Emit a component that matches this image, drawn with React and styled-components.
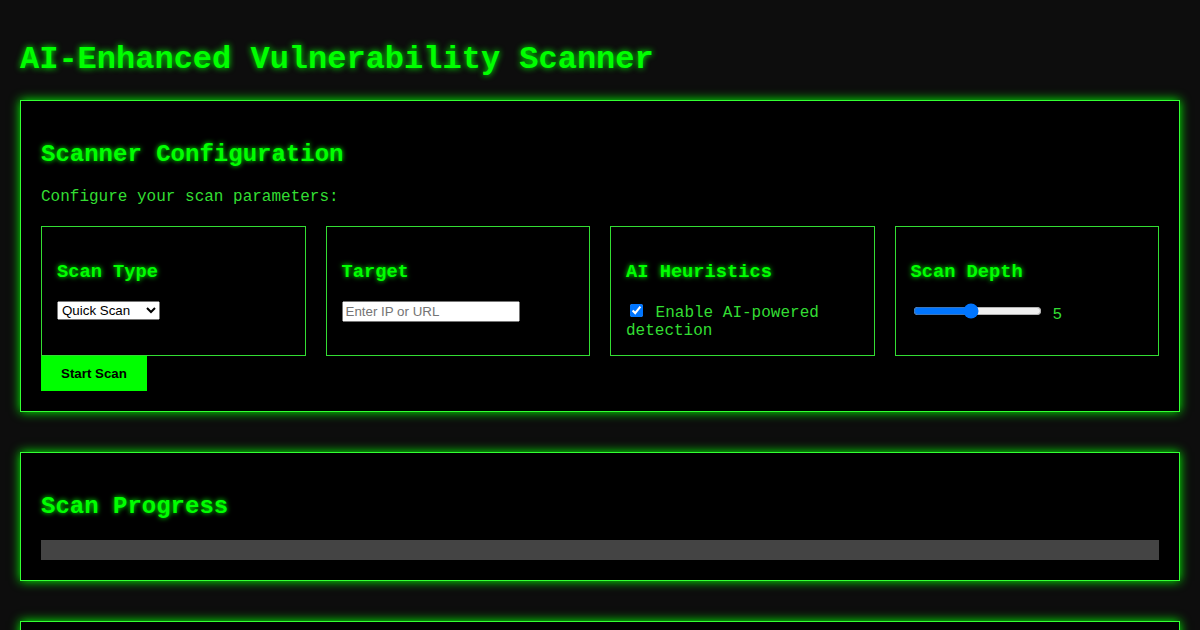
import React, { useState } from "react";
import styled, { createGlobalStyle } from "styled-components";

const GlobalStyle = createGlobalStyle`
  body {
    margin: 0;
    padding: 20px;
    background-color: #0d0d0d;
    color: #33dd33;
    font-family: "Liberation Mono", "Courier New", monospace;
  }
`;

const Title = styled.h1`
  margin: 21px 0 22px;
  font-size: 32px;
  color: #00ff00;
  text-shadow: 0 0 6px #00ff00;
`;

const Panel = styled.section`
  margin-bottom: 40px;
  padding: 20px;
  background-color: #000;
  border: 1px solid #33ff33;
  box-shadow: 0 0 10px #00ff00;

  h2 {
    margin: 20px 0;
    font-size: 24px;
    color: #00ff00;
    text-shadow: 0 0 5px #00ff00;
  }

  p {
    margin: 16px 0;
    font-size: 16px;
  }
`;

const CardGrid = styled.div`
  display: grid;
  grid-template-columns: repeat(4, 1fr);
  gap: 20px;
  margin-top: 20px;
`;

const Card = styled.div`
  padding: 15px;
  border: 1px solid #33dd33;

  h3 {
    margin: 18.72px 0;
    font-size: 18.72px;
    color: #00ff00;
    text-shadow: 0 0 5px #00ff00;
  }
`;

const TargetInput = styled.input`
  width: 170px;
`;

const CheckLabel = styled.label`
  font-size: 16px;
  line-height: 18px;
`;

const DepthValue = styled.span`
  margin-left: 9px;
  font-size: 16px;
`;

const StartButton = styled.button`
  padding: 10px 20px;
  border: none;
  background-color: #00ff00;
  color: #000;
  font-weight: bold;
  cursor: pointer;
`;

const ProgressTrack = styled.div`
  height: 20px;
  background-color: #444;
`;

const ProgressFill = styled.div`
  height: 100%;
  background-color: #00ff00;
`;

export default function App() {
  const [depth, setDepth] = useState(5);
  const [progress] = useState(0);

  return (
    <>
      <GlobalStyle />
      <Title>AI-Enhanced Vulnerability Scanner</Title>

      <Panel>
        <h2>Scanner Configuration</h2>
        <p>Configure your scan parameters:</p>
        <CardGrid>
          <Card>
            <h3>Scan Type</h3>
            <select defaultValue="quick">
              <option value="quick">Quick Scan</option>
              <option value="full">Full Scan</option>
              <option value="custom">Custom Scan</option>
            </select>
          </Card>
          <Card>
            <h3>Target</h3>
            <TargetInput type="text" placeholder="Enter IP or URL" />
          </Card>
          <Card>
            <h3>AI Heuristics</h3>
            <CheckLabel>
              <input type="checkbox" defaultChecked /> Enable AI-powered
              detection
            </CheckLabel>
          </Card>
          <Card>
            <h3>Scan Depth</h3>
            <input
              type="range"
              min="1"
              max="10"
              value={depth}
              onChange={(e) => setDepth(e.target.value)}
            />
            <DepthValue>{depth}</DepthValue>
          </Card>
        </CardGrid>
        <StartButton>Start Scan</StartButton>
      </Panel>

      <Panel>
        <h2>Scan Progress</h2>
        <ProgressTrack>
          <ProgressFill style={{ width: `${progress}%` }} />
        </ProgressTrack>
      </Panel>

      <Panel>
        <h2>Scan Results</h2>
        <p>No results yet.</p>
      </Panel>
    </>
  );
}
